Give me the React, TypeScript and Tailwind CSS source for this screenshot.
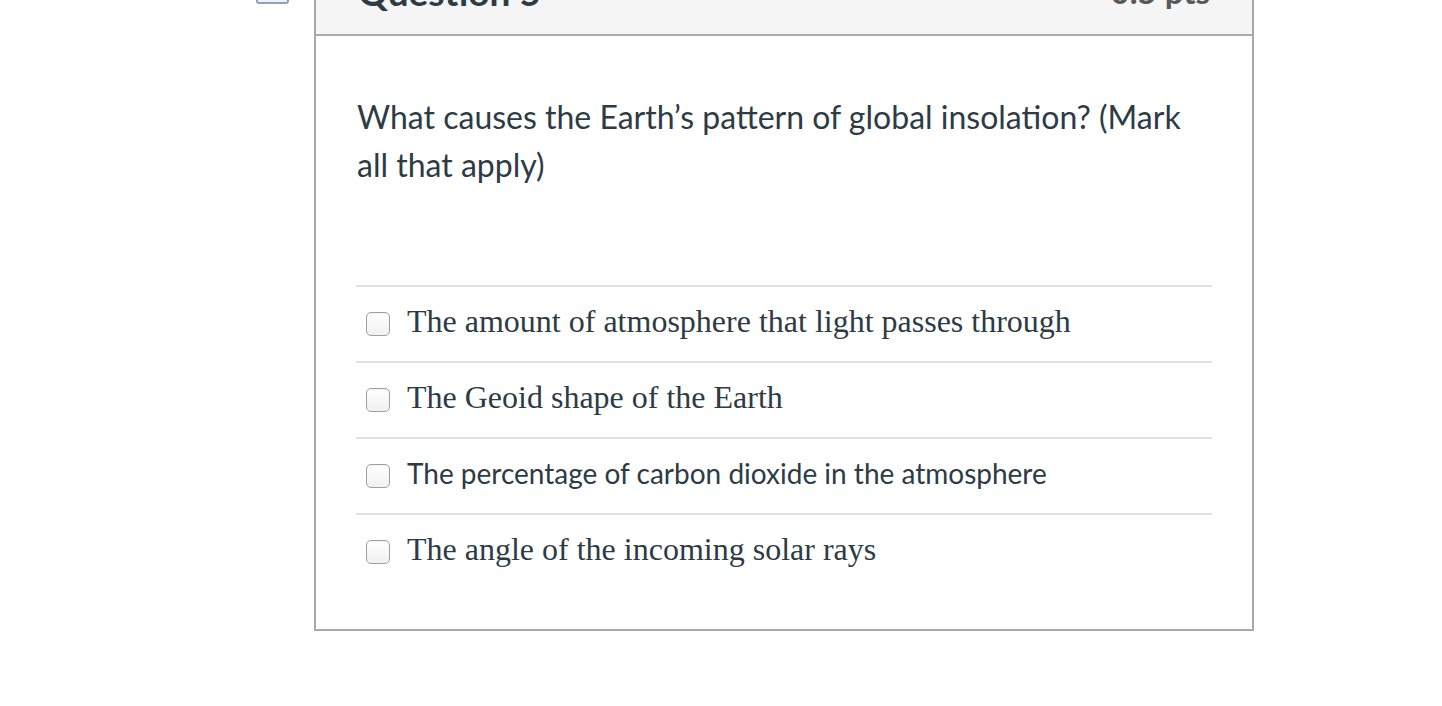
const answers = [
  { text: "The amount of atmosphere that light passes through", serif: true },
  { text: "The Geoid shape of the Earth", serif: true },
  { text: "The percentage of carbon dioxide in the atmosphere", serif: false },
  { text: "The angle of the incoming solar rays", serif: true },
];

const lato = "font-['Lato','Helvetica_Neue',Arial,sans-serif]";
const times = "font-['Liberation_Serif','Times_New_Roman',serif]";

function Checkbox() {
  return (
    <span className="block w-[24px] h-[24px] shrink-0 rounded-[5px] border border-[#a0a0a0] bg-gradient-to-b from-white to-[#f1f1f1] shadow-[inset_0_1px_1px_rgba(0,0,0,0.05)]" />
  );
}

export default function App() {
  return (
    <div className="min-h-screen bg-white overflow-hidden">
      <div className="flex items-start pl-[256px] -mt-[36px]">
        {/* flag toggle, scrolled mostly out of view */}
        <div className="w-[58px] shrink-0 pt-[10px]">
          <div className="w-[33px] h-[30px] rounded-[3px] border-2 border-[#8fa3b8] bg-[#eef2f6]" />
        </div>

        <div className={`w-[940px] border-2 border-[#a9a9a9] bg-white ${lato}`}>
          <div className="flex items-start justify-between bg-[#f5f5f5] border-b-2 border-[#a9a9a9] pl-[42px] pr-[42px] pt-[7px] h-[70px]">
            <span className="text-[37px] leading-[37px] font-bold text-[#2d3b45]">Question 5</span>
            <span className="text-[33px] leading-[37px] font-bold text-[#595959]">0.5 pts</span>
          </div>

          <div className="px-[40px] pt-[57px] pb-[40px]">
            <p className="pl-[1px] text-[32px] leading-[48px] text-[#2d3b45] pr-[20px]">
              What causes the Earth&rsquo;s pattern of global insolation? (Mark all that apply)
            </p>

            <div className="mt-[96px]">
              {answers.map((a) => (
                <div
                  key={a.text}
                  className="flex items-center h-[76px] border-t-2 border-[#e1e1e1]"
                >
                  <div className="pl-[10px] pr-[17px]">
                    <Checkbox />
                  </div>
                  <span
                    className={
                      a.serif
                        ? `${times} text-[32px] leading-[36px] pb-[7px] text-[#2d3b45]`
                        : `${lato} text-[28px] leading-[36px] pb-[7px] text-[#2d3b45]`
                    }
                  >
                    {a.text}
                  </span>
                </div>
              ))}
            </div>
          </div>
        </div>
      </div>
    </div>
  );
}
